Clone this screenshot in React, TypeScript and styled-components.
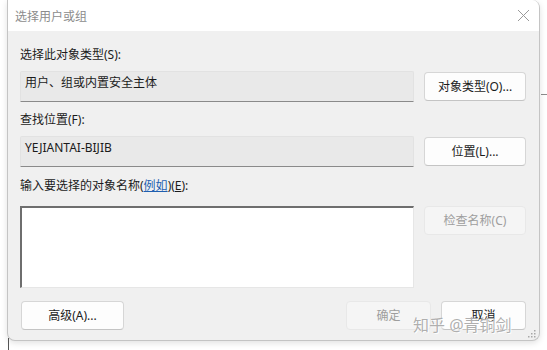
import React from "react"
import styled, { createGlobalStyle } from "styled-components"

const GlobalStyle = createGlobalStyle`
    html, body {
        margin: 0;
        padding: 0;
        background: #ffffff;
    }
    body {
        font-family: "Noto Sans", "Noto Sans CJK SC", sans-serif;
        font-size: 12px;
        color: #1b1b1b;
    }
`

const Page = styled.div`
    position: relative;
    width: 547px;
    height: 350px;
    overflow: hidden;
    padding-left: 7px;
    box-sizing: border-box;

    /* bits of the window behind this dialog */
    &::before {
        content: "";
        position: absolute;
        left: 541px;
        top: 94px;
        width: 6px;
        height: 1px;
        background: #8c8c8c;
    }
    &::after {
        content: "";
        position: absolute;
        left: 8px;
        top: 338px;
        width: 1px;
        height: 12px;
        background: #555;
    }
`

const Window = styled.div`
    position: relative;
    width: 533px;
    height: 341px;
    box-sizing: border-box;
    border: 1px solid #c4c4c4;
    border-top: none;
    border-radius: 0 8px 8px 8px;
    background: #f0f0f0;
    box-shadow: 0 2px 6px rgba(0, 0, 0, 0.12);
    display: flex;
    flex-direction: column;
    overflow: hidden;
`

const TitleBar = styled.div`
    height: 31px;
    flex-shrink: 0;
    background: #ffffff;
    display: flex;
    align-items: center;
    justify-content: space-between;
    padding: 0 9px 0 7px;
`

const Title = styled.span`
    color: #8c8c8c;
    font-size: 12px;
`

const CloseIcon = styled.svg`
    width: 13px;
    height: 13px;
    display: block;
`

const Body = styled.div`
    flex-grow: 1;
    padding: 16px 13px 0 12px;
    display: flex;
    flex-direction: column;
`

const Label = styled.div<{ $gap?: number }>`
    height: 16px;
    line-height: 16px;
    margin-top: ${(p) => p.$gap ?? 0}px;
    white-space: nowrap;
`

const Row = styled.div<{ $gap?: number; $align?: string }>`
    display: flex;
    align-items: ${(p) => p.$align ?? "center"};
    gap: 10px;
    margin-top: ${(p) => p.$gap ?? 0}px;
`

const Field = styled.div`
    width: 394px;
    height: 31px;
    box-sizing: border-box;
    background: #e9e9e9;
    border: 1px solid #e2e2e2;
    border-bottom: 1px solid #8a8a8a;
    border-radius: 2px 2px 0 0;
    padding: 3px 4px 0;
    line-height: 16px;
    color: #1b1b1b;
`

const NameBox = styled.textarea`
    width: 394px;
    height: 82px;
    box-sizing: border-box;
    background: #ffffff;
    border: 1px solid #e6e6e6;
    border-top: 2px solid #6e6e6e;
    border-left: 2px solid #6e6e6e;
    resize: none;
    outline: none;
    margin: 0;
    padding: 2px;
    font-family: inherit;
    font-size: 12px;
`

const Button = styled.button<{ $width?: number; $disabled?: boolean }>`
    width: ${(p) => p.$width ?? 102}px;
    height: 29px;
    box-sizing: border-box;
    margin: 0;
    padding: 0;
    border-radius: 4px;
    border: 1px solid ${(p) => (p.$disabled ? "#e8e8e8" : "#d6d6d6")};
    border-bottom-color: ${(p) => (p.$disabled ? "#e8e8e8" : "#c4c4c4")};
    background: ${(p) => (p.$disabled ? "#f5f5f5" : "#fdfdfd")};
    color: ${(p) => (p.$disabled ? "#9e9e9e" : "#1b1b1b")};
    font-family: inherit;
    font-size: 12px;
    line-height: 16px;
    cursor: default;
`

const Link = styled.span`
    color: #1f5fb0;
    text-decoration: underline;
`

const Under = styled.span`
    text-decoration: underline;
`

const Footer = styled.div`
    display: flex;
    align-items: center;
    margin-top: 13px;
    padding-left: 1px;

    .spacer {
        flex-grow: 1;
    }
    button + button {
        margin-left: 10px;
    }
`

const Watermark = styled.div`
    position: absolute;
    left: 413px;
    top: 315px;
    font-size: 16px;
    line-height: 20px;
    color: rgba(140, 140, 140, 0.7);
    text-shadow: 0 0 1px #fff, 1px 1px 0 rgba(255, 255, 255, 0.9);
    white-space: nowrap;
    pointer-events: none;
`

const Grip = styled.svg`
    position: absolute;
    right: 3px;
    bottom: 2px;
    width: 10px;
    height: 10px;
`

export default function App() {
    return (
        <>
            <GlobalStyle />
            <Page>
                <Window>
                    <TitleBar>
                        <Title>选择用户或组</Title>
                        <CloseIcon viewBox="0 0 13 13">
                            <path d="M1 1 L12 12 M12 1 L1 12" stroke="#9a9a9a" strokeWidth="1" fill="none" />
                        </CloseIcon>
                    </TitleBar>
                    <Body>
                        <Label>选择此对象类型(S):</Label>
                        <Row $gap={8}>
                            <Field>用户、组或内置安全主体</Field>
                            <Button>对象类型(O)...</Button>
                        </Row>

                        <Label $gap={10}>查找位置(F):</Label>
                        <Row $gap={8}>
                            <Field>YEJIANTAI-BIJIB</Field>
                            <Button>位置(L)...</Button>
                        </Row>

                        <Label $gap={11}>
                            输入要选择的对象名称(<Link>例如</Link>)(<Under>E</Under>):
                        </Label>
                        <Row $gap={12} $align="flex-start">
                            <NameBox />
                            <Button $disabled>检查名称(C)</Button>
                        </Row>

                        <Footer>
                            <Button $width={103}>高级(A)...</Button>
                            <div className="spacer" />
                            <Button $width={85} $disabled>确定</Button>
                            <Button $width={85}>取消</Button>
                        </Footer>
                    </Body>
                    <Grip viewBox="0 0 10 10">
                        {[[8, 2], [8, 5], [5, 5], [8, 8], [5, 8], [2, 8]].map(([x, y]) => (
                            <rect key={`${x}-${y}`} x={x} y={y} width="1.5" height="1.5" fill="#a8a8a8" />
                        ))}
                    </Grip>
                </Window>
                <Watermark>知乎 @青铜剑</Watermark>
            </Page>
        </>
    )
}
